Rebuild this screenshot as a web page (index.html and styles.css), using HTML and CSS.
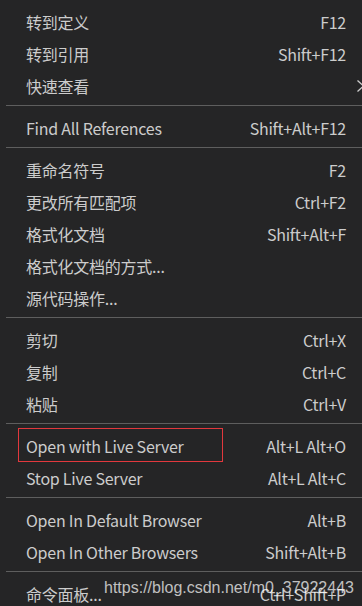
FILE: index.html
```html
<!DOCTYPE html>
<html>
  <head>
    <meta charset="utf-8">
    <title>编辑器右键菜单</title>
    <link rel="stylesheet" href="styles.css">
  </head>
  <body>
    <div class="menu">
      <div class="item"><span class="label">转到定义</span><span class="key">F12</span></div>
      <div class="item"><span class="label">转到引用</span><span class="key">Shift+F12</span></div>
      <div class="item"><span class="label">快速查看</span>
        <svg class="chevron" width="10" height="14" viewBox="0 0 10 14"><path d="M1.5 1.5 L7.5 7 L1.5 12.5" fill="none" stroke="#cccccc" stroke-width="1.3"/></svg>
      </div>
      <div class="sep"></div>
      <div class="item"><span class="label">Find All References</span><span class="key">Shift+Alt+F12</span></div>
      <div class="sep"></div>
      <div class="item"><span class="label">重命名符号</span><span class="key">F2</span></div>
      <div class="item"><span class="label">更改所有匹配项</span><span class="key">Ctrl+F2</span></div>
      <div class="item"><span class="label">格式化文档</span><span class="key">Shift+Alt+F</span></div>
      <div class="item"><span class="label">格式化文档的方式...</span></div>
      <div class="item"><span class="label">源代码操作...</span></div>
      <div class="sep"></div>
      <div class="item"><span class="label">剪切</span><span class="key">Ctrl+X</span></div>
      <div class="item"><span class="label">复制</span><span class="key">Ctrl+C</span></div>
      <div class="item"><span class="label">粘贴</span><span class="key">Ctrl+V</span></div>
      <div class="sep"></div>
      <div class="item"><span class="mark"></span><span class="label">Open with Live Server</span><span class="key">Alt+L Alt+O</span></div>
      <div class="item"><span class="label">Stop Live Server</span><span class="key">Alt+L Alt+C</span></div>
      <div class="sep"></div>
      <div class="item"><span class="label">Open In Default Browser</span><span class="key">Alt+B</span></div>
      <div class="item"><span class="label">Open In Other Browsers</span><span class="key">Shift+Alt+B</span></div>
      <div class="sep"></div>
      <div class="item"><span class="label">命令面板...</span><span class="key">Ctrl+Shift+P</span></div>
    </div>
    <div class="watermark">https://blog.csdn.net/m0_37922443</div>
  </body>
</html>
```

FILE: styles.css
```css
html, body {
  margin: 0;
  height: 606px;
  overflow: hidden;
}
body {
  background: #252526;
  position: relative;
  font-family: "Noto Sans CJK SC", "Noto Sans", sans-serif;
  font-size: 16px;
  letter-spacing: -0.25px;
  color: #cccccc;
}
.menu {
  padding-top: 5px;
}
.item {
  position: relative;
  display: flex;
  align-items: center;
  height: 32px;
  padding: 1px 16px 0 26px;
  box-sizing: border-box;
  white-space: nowrap;
}
.label {
  flex: 1;
}
.key {
  margin-left: 20px;
}
.chevron {
  margin-right: -20px;
}
.sep {
  height: 1px;
  background: #5e5e5e;
  margin: 4px 0 5px 6px;
}
.mark {
  position: absolute;
  left: 18px;
  top: -1px;
  width: 205px;
  height: 34px;
  box-sizing: border-box;
  border: 1px solid #e2383d;
}
.watermark {
  position: absolute;
  left: 104px;
  top: 579px;
  font-family: "Liberation Sans", Arial, sans-serif;
  font-size: 16px;
  letter-spacing: 0;
  color: rgba(255, 255, 255, 0.72);
}
```
